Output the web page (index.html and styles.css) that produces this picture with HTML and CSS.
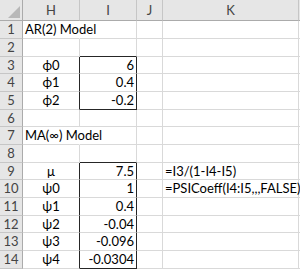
FILE: index.html
```html
<!DOCTYPE html>
<html>
<head>
    <meta charset="UTF-8" />
    <title>ARMA - MA(∞)</title>
    <link rel="stylesheet" href="styles.css">
</head>
<body>
    <div class="sheet">
        <!-- 列标题 -->
        <div class="hd corner"></div>
        <div class="hd col">H</div>
        <div class="hd col">I</div>
        <div class="hd col">J</div>
        <div class="hd col">K</div>
        <div class="hd col last"></div>

        <div class="hd row">1</div>
        <div class="c spill">AR(2) Model</div>
        <div class="c"></div>
        <div class="c"></div>
        <div class="c"></div>
        <div class="c last"></div>

        <div class="hd row">2</div>
        <div class="c"></div>
        <div class="c box-top"></div>
        <div class="c"></div>
        <div class="c"></div>
        <div class="c last"></div>

        <div class="hd row">3</div>
        <div class="c mid box-left">ϕ0</div>
        <div class="c num box">6</div>
        <div class="c"></div>
        <div class="c"></div>
        <div class="c last"></div>

        <div class="hd row">4</div>
        <div class="c mid box-left">ϕ1</div>
        <div class="c num box">0.4</div>
        <div class="c"></div>
        <div class="c"></div>
        <div class="c last"></div>

        <div class="hd row">5</div>
        <div class="c mid box-left">ϕ2</div>
        <div class="c num box box-top">-0.2</div>
        <div class="c"></div>
        <div class="c"></div>
        <div class="c last"></div>

        <div class="hd row">6</div>
        <div class="c"></div>
        <div class="c"></div>
        <div class="c"></div>
        <div class="c"></div>
        <div class="c last"></div>

        <div class="hd row">7</div>
        <div class="c spill">MA(∞) Model</div>
        <div class="c"></div>
        <div class="c"></div>
        <div class="c"></div>
        <div class="c last"></div>

        <div class="hd row">8</div>
        <div class="c"></div>
        <div class="c box-top"></div>
        <div class="c"></div>
        <div class="c"></div>
        <div class="c last"></div>

        <div class="hd row">9</div>
        <div class="c mid box-left">μ</div>
        <div class="c num box">7.5</div>
        <div class="c"></div>
        <div class="c">=I3/(1-I4-I5)</div>
        <div class="c last"></div>

        <div class="hd row">10</div>
        <div class="c mid box-left">ψ0</div>
        <div class="c num box">1</div>
        <div class="c"></div>
        <div class="c">=PSICoeff(I4:I5,,,FALSE)</div>
        <div class="c last"></div>

        <div class="hd row">11</div>
        <div class="c mid box-left">ψ1</div>
        <div class="c num box">0.4</div>
        <div class="c"></div>
        <div class="c"></div>
        <div class="c last"></div>

        <div class="hd row">12</div>
        <div class="c mid box-left">ψ2</div>
        <div class="c num box">-0.04</div>
        <div class="c"></div>
        <div class="c"></div>
        <div class="c last"></div>

        <div class="hd row">13</div>
        <div class="c mid box-left">ψ3</div>
        <div class="c num box">-0.096</div>
        <div class="c"></div>
        <div class="c"></div>
        <div class="c last"></div>

        <div class="hd row">14</div>
        <div class="c mid box-left">ψ4</div>
        <div class="c num box box-top">-0.0304</div>
        <div class="c"></div>
        <div class="c"></div>
        <div class="c last"></div>
    </div>
</body>
</html>
```

FILE: styles.css
```css
* {
    margin: 0;
    padding: 0;
    box-sizing: border-box;
}
body {
    background: #ffffff;
    font-family: Lato, "Liberation Sans", sans-serif;
    font-size: 13px;
    color: #000;
    overflow: hidden;
}

/* 表格网格：行号列 + H I J K 列 */
.sheet {
    display: grid;
    grid-template-columns: 23px 57px 57px 26px 136px 1fr;
    grid-template-rows: 21px 18px 18px 17px 18px 18px 17px 18px 18px 17px 18px 18px 17px 18px 18px;
    width: 300px;
}

/* 普通单元格 */
.c {
    border-right: 1px solid #d9d9d9;
    border-bottom: 1px solid #d9d9d9;
    padding: 0 2px;
    line-height: 17px;
    white-space: nowrap;
}
.c.spill {
    overflow: visible;
    border-right-color: #fff;
    position: relative;
    z-index: 1;
}
.c.mid {
    text-align: center;
}
.c.num {
    text-align: right;
}

/* 外框 */
.c.box {
    border-right: 1px solid #262626;
}
.c.box-left {
    border-right: 1px solid #262626;
}
.c.box-top {
    border-bottom: 1px solid #262626;
}

/* 标题栏 */
.hd {
    background: #e6e6e6;
    color: #444;
    border-right: 1px solid #c6c6c6;
    border-bottom: 1px solid #c6c6c6;
    text-align: center;
}
.hd.col {
    line-height: 20px;
    border-bottom-color: #ababab;
}
.hd.row {
    line-height: 17px;
    border-right-color: #ababab;
}
.hd.corner {
    position: relative;
    border-right-color: #ababab;
    border-bottom-color: #ababab;
}
.hd.corner::after {
    content: "";
    position: absolute;
    right: 2px;
    bottom: 2px;
    width: 0;
    height: 0;
    border-left: 12px solid transparent;
    border-bottom: 12px solid #b8b8b8;
}
.last {
    border-right: none;
}
```
